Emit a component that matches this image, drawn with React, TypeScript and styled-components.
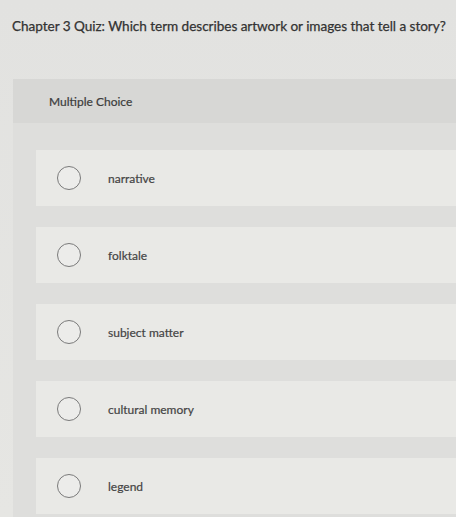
import React from "react";
import styled, { createGlobalStyle } from "styled-components";

const GlobalStyle = createGlobalStyle`
    html, body {
        margin: 0;
        padding: 0;
        background-color: #e4e4e2;
        font-family: Lato, "Open Sans", "Liberation Sans", sans-serif;
    }
`;

const Page = styled.div`
    width: 456px;
    height: 517px;
    overflow: hidden;
    background: linear-gradient(180deg, #e2e2e0 0%, #e6e6e3 100%);
`;
const Title = styled.div`
    padding: 18px 0 0 12px;
    height: 79px;
    box-sizing: border-box;
    font-size: 13.6px;
    font-weight: 400;
    letter-spacing: -0.05px;
    color: #333333;
    white-space: nowrap;
    -webkit-text-stroke: 0.25px #333333;
`;
const Panel = styled.div`
    margin-left: 13px;
    background-color: #dededc;
    height: 438px;
`;
const PanelHeader = styled.div`
    display: flex;
    align-items: center;
    height: 44px;
    padding-left: 36px;
    background-color: #d7d7d5;
    font-size: 12px;
    font-weight: 400;
    color: #3c3c3c;
    -webkit-text-stroke: 0.2px #3c3c3c;
`;
const OptionList = styled.div`
    display: flex;
    flex-direction: column;
    gap: 21px;
    padding: 27px 0 0 23px;
`;
const OptionCard = styled.div`
    display: flex;
    align-items: center;
    gap: 27px;
    height: 56px;
    padding-left: 21px;
    background-color: #e9e9e6;
`;
const Radio = styled.span`
    width: 22px;
    height: 22px;
    border-radius: 50%;
    border: 1.6px solid #7a7a7a;
    background-color: #ececea;
    flex-shrink: 0;
`;
const OptionText = styled.span`
    font-size: 12px;
    font-weight: 400;
    color: #444444;
    -webkit-text-stroke: 0.2px #444444;
`;

const options = ["narrative", "folktale", "subject matter", "cultural memory", "legend"];

const App = () => {
    return (
        <>
            <GlobalStyle />
            <Page>
                <Title>Chapter 3 Quiz: Which term describes artwork or images that tell a story?</Title>
                <Panel>
                    <PanelHeader>Multiple Choice</PanelHeader>
                    <OptionList>
                        {options.map((o) => (
                            <OptionCard key={o}>
                                <Radio />
                                <OptionText>{o}</OptionText>
                            </OptionCard>
                        ))}
                    </OptionList>
                </Panel>
            </Page>
        </>
    );
};

export default App;
